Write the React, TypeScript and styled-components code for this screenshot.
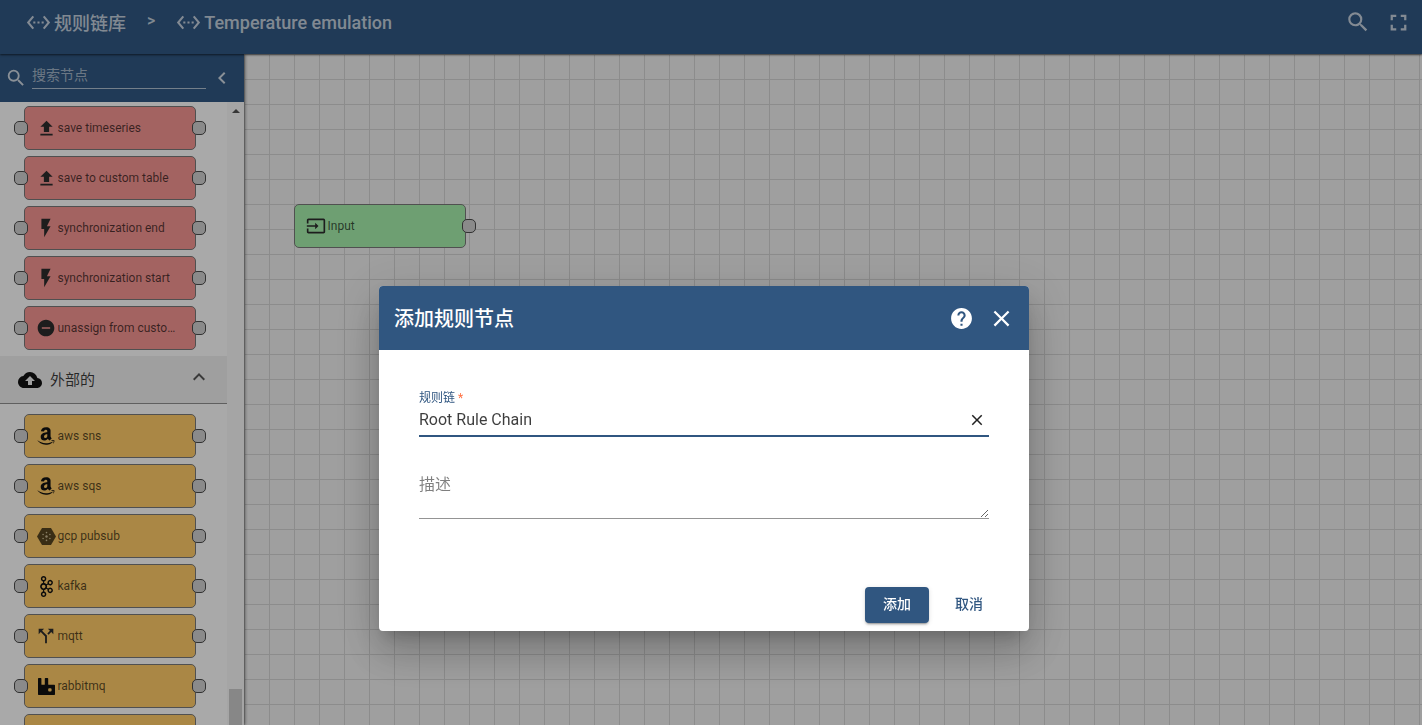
import React from "react";
import styled, { createGlobalStyle } from "styled-components";
import { FaAmazon } from "react-icons/fa";
import {
  MdCallSplit,
  MdChevronLeft,
  MdClose,
  MdCloudUpload,
  MdExpandLess,
  MdFileUpload,
  MdFlashOn,
  MdFullscreen,
  MdHelp,
  MdInput,
  MdRemoveCircle,
  MdSearch,
  MdSettingsEthernet,
} from "react-icons/md";
import { SiApachekafka, SiRabbitmq } from "react-icons/si";

const FONT = `Roboto, "Noto Sans CJK SC", sans-serif`;
const PRIMARY = "#305680";
const ACTION = "#f1928f";
const EXTERNAL = "#fbc766";
const INPUT = "#a3eaa9";

const GlobalStyle = createGlobalStyle`
  html, body {
    margin: 0;
    height: 100%;
    overflow: hidden;
    font-family: ${FONT};
  }
  * {
    box-sizing: border-box;
  }
`;

const Page = styled.div`
  width: 1422px;
  height: 725px;
  display: flex;
  flex-direction: column;
  overflow: hidden;
`;

const Toolbar = styled.header`
  height: 54px;
  flex: none;
  display: flex;
  justify-content: space-between;
  padding: 0 10px 10px 26px;
  background: ${PRIMARY};
  box-shadow: 0 1px 2px rgba(0, 0, 0, 0.6);
  color: rgba(255, 255, 255, 0.7);
  position: relative;
  z-index: 2;
`;

const Crumbs = styled.div`
  display: flex;
  align-items: center;
  font-size: 18px;
  font-weight: 500;
`;

const Crumb = styled.span`
  display: flex;
  align-items: center;
  gap: 3px;
`;

const Separator = styled.span`
  margin: -3px 21px 0 21px;
  font-size: 16px;
`;

const ToolbarActions = styled.div`
  display: flex;
  align-items: center;
  gap: 14px;
`;

const Main = styled.div`
  flex: 1;
  min-height: 0;
  display: flex;
`;

const Sidebar = styled.aside`
  width: 244px;
  flex: none;
  display: flex;
  flex-direction: column;
  background: #f5f5f5;
  box-shadow: 1px 0 3px rgba(0, 0, 0, 0.5);
  position: relative;
  z-index: 1;
`;

const SearchBar = styled.div`
  height: 48px;
  flex: none;
  display: flex;
  align-items: center;
  padding: 0 10px 0 5px;
  background: ${PRIMARY};
  color: rgba(255, 255, 255, 0.75);
`;

const SearchInput = styled.input`
  width: 174px;
  height: 26px;
  margin: -5px 4px 0 5px;
  padding: 1px 0 2px;
  border: 0;
  border-bottom: 1px solid rgba(255, 255, 255, 0.6);
  background: transparent;
  outline: none;
  color: #fff;
  font: 14px ${FONT};

  &::placeholder {
    color: rgba(255, 255, 255, 0.55);
  }
`;

const SidebarBody = styled.div`
  flex: 1;
  min-height: 0;
  display: flex;
`;

const NodeList = styled.div`
  width: 227px;
  flex: none;
  padding-top: 4px;
  overflow: hidden;
  background: #fafafa;
`;

const NodeGroup = styled.div`
  padding: 0 0 6px 24px;
`;

const SectionHeader = styled.div`
  height: 48px;
  margin-bottom: 10px;
  display: flex;
  align-items: center;
  padding: 0 16px 0 18px;
  background: #ebebeb;
  border-bottom: 1px solid #8c8c8c;
  color: rgba(0, 0, 0, 0.76);
  font-size: 15px;
`;

const SectionTitle = styled.span`
  flex: 1;
  margin: -2px 0 0 8px;
`;

const SectionToggle = styled(MdExpandLess)`
  margin-top: -6px;
  color: #555;
`;

const Scrollbar = styled.div`
  width: 17px;
  flex: none;
  position: relative;
  background: #f3f3f3;
`;

const ScrollArrow = styled.div`
  position: absolute;
  top: 7px;
  left: 5px;
  border-left: 4px solid transparent;
  border-right: 4px solid transparent;
  border-bottom: 4px solid #505050;
`;

const ScrollThumb = styled.div`
  position: absolute;
  left: 2px;
  right: 2px;
  bottom: 0;
  height: 36px;
  background: #c8c8c8;
`;

const NodeBox = styled.div<{ $color: string }>`
  width: 172px;
  height: 44px;
  position: relative;
  display: flex;
  align-items: center;
  padding: 0 18px 0 10px;
  border: 1px solid #777;
  border-radius: 5px;
  background: ${(p) => p.$color};
  color: rgba(0, 0, 0, 0.66);
  font-size: 12px;
  & + & {
    margin-top: 6px;
  }
`;

const NodeIcon = styled.span`
  width: 22px;
  flex: none;
  display: flex;
  justify-content: center;
  align-items: center;
  color: #2c2c2c;
`;

const NodeName = styled.span`
  min-width: 0;
  margin-left: 0.5px;
  white-space: nowrap;
  overflow: hidden;
  text-overflow: ellipsis;
`;

const Port = styled.span<{ $side: "left" | "right" }>`
  position: absolute;
  top: 14px;
  ${(p) => p.$side}: -11px;
  width: 14px;
  height: 14px;
  border: 1px solid #4a4a4a;
  border-radius: 5px;
  background: #ccc;
`;

const Canvas = styled.main`
  flex: 1;
  position: relative;
  overflow: hidden;
  background-color: #ebebeb;
  background-image: linear-gradient(to right, #cecece 1px, transparent 1px),
    linear-gradient(to bottom, #cecece 1px, transparent 1px);
  background-size: 25px 25px;
`;

const CanvasNode = styled.div`
  position: absolute;
  left: 50px;
  top: 150px;
`;

const Backdrop = styled.div`
  position: fixed;
  inset: 0;
  z-index: 10;
  background: rgba(0, 0, 0, 0.32);
`;

const Dialog = styled.form`
  position: fixed;
  z-index: 11;
  left: 379px;
  top: 286px;
  width: 650px;
  height: 345px;
  display: flex;
  flex-direction: column;
  border-radius: 4px;
  overflow: hidden;
  background: #fff;
  box-shadow: 0 11px 15px -7px rgba(0, 0, 0, 0.2),
    0 24px 38px 3px rgba(0, 0, 0, 0.14), 0 9px 46px 8px rgba(0, 0, 0, 0.12);
`;

const DialogHeader = styled.div`
  height: 64px;
  flex: none;
  display: flex;
  align-items: center;
  padding: 0 14px 0 15px;
  background: ${PRIMARY};
  color: #fff;
`;

const DialogTitle = styled.h2`
  flex: 1;
  margin: -2px 0 0;
  font-size: 20px;
  font-weight: 500;
`;

const DialogActions = styled.div`
  display: flex;
  align-items: center;
  gap: 14px;
`;

const DialogBody = styled.div`
  flex: 1;
  padding: 0 40px;
`;

const Field = styled.div<{ $active?: boolean }>`
  position: relative;
  border-bottom: ${(p) => (p.$active ? `2px solid ${PRIMARY}` : "1px solid #949494")};
`;

const ChainField = styled(Field)`
  height: 48px;
  margin-top: 39px;
  padding-top: 2px;
`;

const DescriptionField = styled(Field)`
  height: 51px;
  margin-top: 31px;
  padding-top: 5px;
`;

const FieldLabel = styled.label`
  display: block;
  margin-bottom: 2px;
  color: ${PRIMARY};
  font-size: 12px;
  line-height: 14px;
`;

const Required = styled.span`
  color: #ff7043;
`;

const ChainInput = styled.input`
  width: 100%;
  height: 24px;
  padding: 0 30px 0 0;
  border: 0;
  outline: none;
  background: transparent;
  color: rgba(0, 0, 0, 0.76);
  font: 16px ${FONT};
`;

const ClearButton = styled.span`
  position: absolute;
  right: 3px;
  top: 22px;
  display: flex;
  color: #222;
`;

const DescriptionInput = styled.textarea`
  display: block;
  width: 100%;
  height: 45px;
  padding: 0;
  border: 0;
  outline: none;
  resize: vertical;
  font: 16px ${FONT};
  line-height: 24px;

  &::placeholder {
    color: rgba(0, 0, 0, 0.5);
  }
`;

const DialogFooter = styled.div`
  height: 44px;
  margin-bottom: 8px;
  flex: none;
  display: flex;
  align-items: flex-end;
  justify-content: flex-end;
  gap: 8px;
  padding-right: 28px;
`;

const Button = styled.button<{ $primary?: boolean }>`
  width: 64px;
  height: 36px;
  padding: 0 0 4px;
  border: 0;
  border-radius: 4px;
  background: ${(p) => (p.$primary ? PRIMARY : "transparent")};
  color: ${(p) => (p.$primary ? "#fff" : PRIMARY)};
  box-shadow: ${(p) =>
    p.$primary
      ? "0 3px 1px -2px rgba(0,0,0,.2), 0 2px 2px 0 rgba(0,0,0,.14), 0 1px 5px 0 rgba(0,0,0,.12)"
      : "none"};
  font: 500 14px ${FONT};
`;

const PubSubIcon: React.FC = () => (
  <svg width="19" height="17" viewBox="0 0 19 17">
    <path d="M5 0h9l5 8.5-5 8.5H5L0 8.5z" fill="#54431f" />
    <g fill="#c9b995">
      <circle cx="9.5" cy="8.5" r="1.2" />
      <circle cx="9.5" cy="4.6" r="0.8" />
      <circle cx="9.5" cy="12.4" r="0.8" />
      <circle cx="6.1" cy="6.5" r="0.8" />
      <circle cx="12.9" cy="6.5" r="0.8" />
      <circle cx="6.1" cy="10.5" r="0.8" />
      <circle cx="12.9" cy="10.5" r="0.8" />
    </g>
  </svg>
);

interface INode {
  name: string;
  icon?: React.ReactNode;
}

const actionNodes: INode[] = [
  { name: "save timeseries", icon: <MdFileUpload size={21} /> },
  { name: "save to custom table", icon: <MdFileUpload size={21} /> },
  { name: "synchronization end", icon: <MdFlashOn size={22} /> },
  { name: "synchronization start", icon: <MdFlashOn size={22} /> },
  { name: "unassign from customer", icon: <MdRemoveCircle size={20} /> },
];

const externalNodes: INode[] = [
  { name: "aws sns", icon: <FaAmazon size={20} color="#111" /> },
  { name: "aws sqs", icon: <FaAmazon size={20} color="#111" /> },
  { name: "gcp pubsub", icon: <PubSubIcon /> },
  { name: "kafka", icon: <SiApachekafka size={21} color="#111" /> },
  { name: "mqtt", icon: <MdCallSplit size={22} /> },
  { name: "rabbitmq", icon: <SiRabbitmq size={17} color="#111" /> },
  { name: "" },
];

const RuleNode: React.FC<{ node: INode; color: string; source?: boolean }> = ({
  node,
  color,
  source,
}) => (
  <NodeBox $color={color}>
    {!source && <Port $side="left" />}
    <NodeIcon>{node.icon}</NodeIcon>
    <NodeName>{node.name}</NodeName>
    <Port $side="right" />
  </NodeBox>
);

const App: React.FC = () => (
  <Page>
    <GlobalStyle />
    <Toolbar>
      <Crumbs>
        <Crumb>
          <MdSettingsEthernet size={25} />
          规则链库
        </Crumb>
        <Separator>&gt;</Separator>
        <Crumb>
          <MdSettingsEthernet size={25} />
          Temperature emulation
        </Crumb>
      </Crumbs>
      <ToolbarActions>
        <MdSearch size={26} />
        <MdFullscreen size={27} />
      </ToolbarActions>
    </Toolbar>
    <Main>
      <Sidebar>
        <SearchBar>
          <MdSearch size={22} />
          <SearchInput placeholder="搜索节点" readOnly />
          <MdChevronLeft size={24} />
        </SearchBar>
        <SidebarBody>
          <NodeList>
            <NodeGroup>
              {actionNodes.map((node) => (
                <RuleNode key={node.name} node={node} color={ACTION} />
              ))}
            </NodeGroup>
            <SectionHeader>
              <MdCloudUpload size={24} color="#111" />
              <SectionTitle>外部的</SectionTitle>
              <SectionToggle size={24} />
            </SectionHeader>
            <NodeGroup>
              {externalNodes.map((node) => (
                <RuleNode key={node.name} node={node} color={EXTERNAL} />
              ))}
            </NodeGroup>
          </NodeList>
          <Scrollbar>
            <ScrollArrow />
            <ScrollThumb />
          </Scrollbar>
        </SidebarBody>
      </Sidebar>
      <Canvas>
        <CanvasNode>
          <RuleNode
            node={{ name: "Input", icon: <MdInput size={20} /> }}
            color={INPUT}
            source
          />
        </CanvasNode>
      </Canvas>
    </Main>
    <Backdrop />
    <Dialog>
      <DialogHeader>
        <DialogTitle>添加规则节点</DialogTitle>
        <DialogActions>
          <MdHelp size={25} />
          <MdClose size={27} />
        </DialogActions>
      </DialogHeader>
      <DialogBody>
        <ChainField $active>
          <FieldLabel>
            规则链 <Required>*</Required>
          </FieldLabel>
          <ChainInput defaultValue="Root Rule Chain" />
          <ClearButton>
            <MdClose size={18} />
          </ClearButton>
        </ChainField>
        <DescriptionField>
          <DescriptionInput placeholder="描述" />
        </DescriptionField>
      </DialogBody>
      <DialogFooter>
        <Button type="button" $primary>
          添加
        </Button>
        <Button type="button">取消</Button>
      </DialogFooter>
    </Dialog>
  </Page>
);

export default App;
